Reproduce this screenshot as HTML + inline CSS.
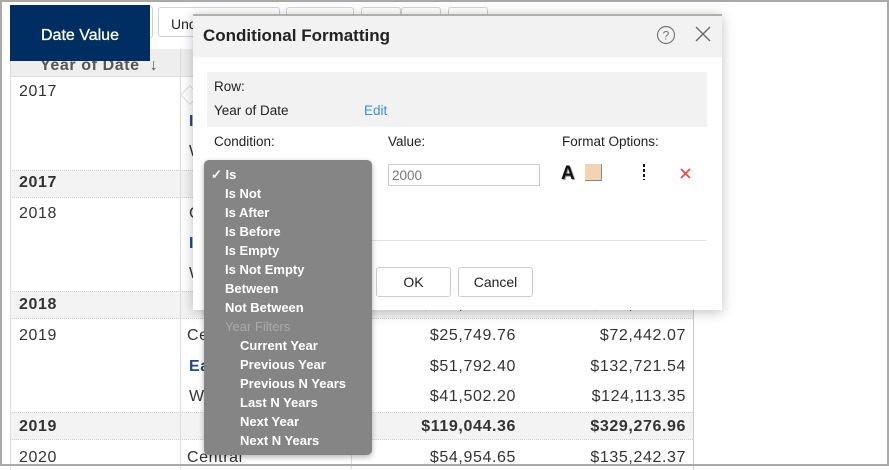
<!DOCTYPE html>
<html><head><meta charset="utf-8"><style>
*{margin:0;padding:0;box-sizing:border-box}
body{width:889px;height:466px;overflow:hidden;background:#fff;font-family:"Liberation Sans",sans-serif;position:relative}
.a{position:absolute;white-space:nowrap}
.frame{position:absolute;left:0;top:0;width:889px;height:466px;border:2px solid #a9a9a9;z-index:50;pointer-events:none}
.t{font-size:16px;color:#333;letter-spacing:.6px}
.b{font-weight:bold}
.r{text-align:right}
.dd div{height:19px;line-height:19px;font-size:13px;color:#fff;font-weight:bold}
.lb{font-size:13.5px;color:#222}
</style></head><body>
<!-- table -->
<div class="a" style="left:10px;top:49px;width:683px;height:28px;background:#eee;border-bottom:1px solid #ddd"></div>
<div class="a t b" style="left:40px;top:57px;color:#555;font-size:16px">Year of Date &nbsp;↓</div>
<div class="a" style="left:10px;top:170px;width:683px;height:28px;background:#f3f3f3;border-top:1px dotted #ccc;border-bottom:1px dotted #ccc"></div>
<div class="a" style="left:10px;top:291px;width:683px;height:28px;background:#f3f3f3;border-top:1px dotted #ccc;border-bottom:1px dotted #ccc"></div>
<div class="a" style="left:10px;top:412px;width:683px;height:28px;background:#f3f3f3;border-top:1px dotted #ccc;border-bottom:1px dotted #ccc"></div>
<div class="a" style="left:180px;top:49px;width:1px;height:420px;background:#ddd"></div>
<div class="a" style="left:351px;top:49px;width:1px;height:420px;background:#ddd"></div>
<div class="a" style="left:693px;top:49px;width:1px;height:420px;background:#ccc"></div>
<div class="a" style="left:10px;top:60px;width:1px;height:410px;background:#ddd"></div>
<div class="a t" style="left:19px;top:83px">2017</div>
<div class="a t b" style="left:19px;top:174px">2017</div>
<div class="a t" style="left:19px;top:205px">2018</div>
<div class="a t b" style="left:19px;top:296px">2018</div>
<div class="a t" style="left:19px;top:327px">2019</div>
<div class="a t b" style="left:19px;top:418px">2019</div>
<div class="a t" style="left:19px;top:449px">2020</div>
<div class="a t b" style="left:189px;top:113px;color:#1d4a8a">I</div>
<div class="a t" style="left:189px;top:143px">W</div>
<div class="a t" style="left:189px;top:205px">C</div>
<div class="a t b" style="left:189px;top:235px;color:#1d4a8a">I</div>
<div class="a t" style="left:189px;top:265px">W</div>
<div class="a t" style="left:187px;top:327px">Ce</div>
<div class="a t b" style="left:189px;top:358px;color:#1d4a8a">Ea</div>
<div class="a t" style="left:189px;top:388px">W</div>
<div class="a t" style="left:187px;top:449px">Central</div>
<div class="a t r" style="left:366px;width:150px;top:327px">$25,749.76</div>
<div class="a t r" style="left:526px;width:160px;top:327px">$72,442.07</div>
<div class="a t r" style="left:366px;width:150px;top:358px">$51,792.40</div>
<div class="a t r" style="left:526px;width:160px;top:358px">$132,721.54</div>
<div class="a t r" style="left:366px;width:150px;top:388px">$41,502.20</div>
<div class="a t r" style="left:526px;width:160px;top:388px">$124,113.35</div>
<div class="a t r b" style="left:366px;width:150px;top:418px">$119,044.36</div>
<div class="a t r b" style="left:526px;width:160px;top:418px">$329,276.96</div>
<div class="a t r" style="left:366px;width:150px;top:449px">$54,954.65</div>
<div class="a t r" style="left:526px;width:160px;top:449px">$135,242.37</div>
<div class="a t r" style="left:366px;width:150px;top:296px">$112,702.20</div>
<div class="a t r" style="left:526px;width:160px;top:296px">$300,499.08</div>
<!-- toolbar -->
<div class="a" style="left:150px;top:6px;width:3px;height:32px;border:1px solid #ccd;border-left:none;border-radius:0 4px 4px 0"></div>
<div class="a" style="left:158px;top:7px;width:122px;height:30px;border:1px solid #ccd4e0;border-radius:3px;font-size:14px;padding:8px 0 0 12px;color:#222">Undo</div>
<div class="a" style="left:286px;top:7px;width:68px;height:30px;border:1px solid #ccd4e0;border-radius:3px"></div>
<div class="a" style="left:361px;top:7px;width:40px;height:30px;border:1px solid #ccd4e0;border-radius:3px"></div>
<div class="a" style="left:401px;top:7px;width:40px;height:30px;border:1px solid #ccd4e0;border-radius:3px"></div>
<div class="a" style="left:448px;top:7px;width:40px;height:30px;border:1px solid #ccd4e0;border-radius:3px"></div>
<div class="a" style="left:10px;top:5px;width:140px;height:56px;background:#002d62;color:#fff;font-size:16px;text-align:center;line-height:62px;-webkit-text-stroke:.3px #fff">Date Value</div>
<!-- dialog -->
<div class="a" style="left:183px;top:88px;width:14px;height:14px;background:#fff;border:1px solid #ddd;transform:rotate(45deg);"></div>
<div class="a" style="left:193px;top:14px;width:529px;height:296px;background:#fff;box-shadow:0 2px 12px rgba(0,0,0,.25);border-top:2px solid #b0b0a8">
 <div class="a" style="left:0;top:0;width:529px;height:41px;background:#f2f2f2"></div>
 <div class="a" style="left:10px;top:10px;font-size:17px;font-weight:bold;color:#222">Conditional Formatting</div>
 <svg class="a" style="left:463px;top:9px" width="20" height="20"><circle cx="10" cy="10" r="8.5" fill="none" stroke="#777" stroke-width="1.2"/><text x="10" y="14.5" font-size="12" text-anchor="middle" fill="#777" font-family="Liberation Sans">?</text></svg>
 <svg class="a" style="left:502px;top:10px" width="16" height="16"><path d="M1 1L15 15M15 1L1 15" stroke="#666" stroke-width="1.3"/></svg>
 <div class="a" style="left:14px;top:56px;width:500px;height:55px;background:#f2f2f2"></div>
 <div class="a lb" style="left:21px;top:63px">Row:</div>
 <div class="a lb" style="left:21px;top:87px">Year of Date</div>
 <div class="a lb" style="left:171px;top:87px;color:#3a8ee6">Edit</div>
 <div class="a lb" style="left:21px;top:118px">Condition:</div>
 <div class="a lb" style="left:195px;top:118px">Value:</div>
 <div class="a lb" style="left:369px;top:118px">Format Options:</div>
 <div class="a" style="left:195px;top:148px;width:152px;height:22px;border:1px solid #ccc;font-size:13.5px;color:#777;padding:3px 0 0 3px">2000</div>
 <div class="a" style="left:368px;top:147px;font-size:19px;font-weight:bold;color:#111;text-shadow:1px 1px 1px #888">A</div>
 <div class="a" style="left:392px;top:148px;width:17px;height:17px;background:#f2d3b3;border:1px solid #888;border-width:0 1px 1px 0"></div>
 <div class="a" style="left:450px;top:148px;width:2px;height:16px;background:repeating-linear-gradient(#111 0 3px,transparent 3px 5px)"></div>
 <svg class="a" style="left:487px;top:152px" width="11" height="11"><path d="M1 1L10 10M10 1L1 10" stroke="#f04444" stroke-width="1.6"/></svg>
 <div class="a" style="left:14px;top:224px;width:500px;height:1px;background:#e2e2e2"></div>
 <div class="a" style="left:183px;top:251px;width:75px;height:30px;border:1px solid #ccc;border-radius:3px;font-size:14px;text-align:center;line-height:28px;color:#222">OK</div>
 <div class="a" style="left:265px;top:251px;width:75px;height:30px;border:1px solid #ccc;border-radius:3px;font-size:14px;text-align:center;line-height:28px;color:#222">Cancel</div>
</div>
<!-- dropdown -->
<div class="a dd" style="left:204px;top:160px;width:168px;height:295px;background:#858585;border-radius:5px;padding:5px 0 0 0;box-shadow:0 2px 6px rgba(0,0,0,.3)">
 <div style="padding-left:7px">✓ Is</div>
 <div style="padding-left:21px">Is Not</div>
 <div style="padding-left:21px">Is After</div>
 <div style="padding-left:21px">Is Before</div>
 <div style="padding-left:21px">Is Empty</div>
 <div style="padding-left:21px">Is Not Empty</div>
 <div style="padding-left:21px">Between</div>
 <div style="padding-left:21px">Not Between</div>
 <div style="padding-left:21px;color:#aaa;font-weight:normal">Year Filters</div>
 <div style="padding-left:36px">Current Year</div>
 <div style="padding-left:36px">Previous Year</div>
 <div style="padding-left:36px">Previous N Years</div>
 <div style="padding-left:36px">Last N Years</div>
 <div style="padding-left:36px">Next Year</div>
 <div style="padding-left:36px">Next N Years</div>
</div>
<div class="frame"></div>
</body></html>
